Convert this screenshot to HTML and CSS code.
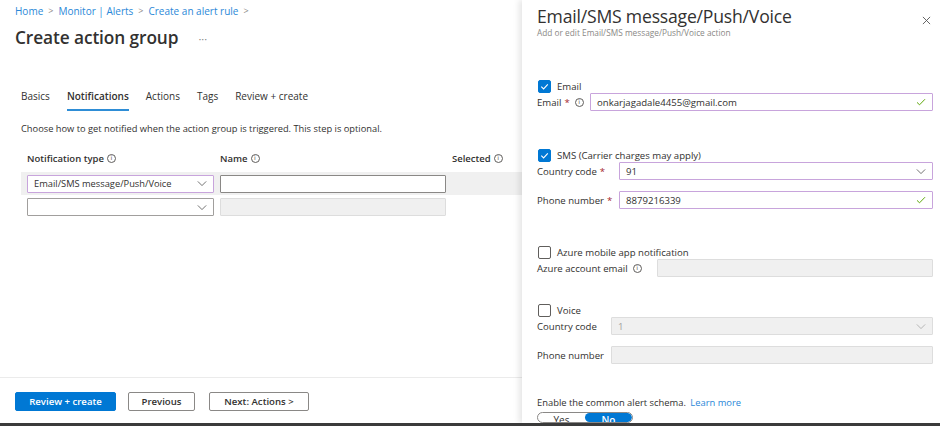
FILE: index.html
```html
<!DOCTYPE html>
<html>
<head>
<meta charset="utf-8">
<link rel="stylesheet" href="styles.css">
</head>
<body>
<div class="screen">
  <div class="main">
    <div class="breadcrumb">
      <span class="crumb">Home</span><span class="sep">&gt;</span>
      <span class="crumb">Monitor | Alerts</span><span class="sep">&gt;</span>
      <span class="crumb">Create an alert rule</span><span class="sep">&gt;</span>
    </div>
    <div class="title-row">
      <h1 class="title">Create action group</h1>
      <span class="more">···</span>
    </div>
    <div class="tabs">
      <span class="tab">Basics</span>
      <span class="tab active">Notifications</span>
      <span class="tab">Actions</span>
      <span class="tab">Tags</span>
      <span class="tab">Review + create</span>
    </div>
    <p class="desc">Choose how to get notified when the action group is triggered. This step is optional.</p>
    <div class="table">
      <div class="thead">
        <div class="c1">Notification type <span class="info">i</span></div>
        <div class="c2">Name <span class="info">i</span></div>
        <div class="c3">Selected <span class="info">i</span></div>
      </div>
      <div class="trow hl">
        <div class="c1"><div class="select focus"><span>Email/SMS message/Push/Voice</span><svg class="chev" viewBox="0 0 12 8"><path d="M1 1.5 L6 6.5 L11 1.5" fill="none" stroke="#555" stroke-width="1"/></svg></div></div>
        <div class="c2"><div class="input"></div></div>
        <div class="c3"></div>
      </div>
      <div class="trow">
        <div class="c1"><div class="select"><span></span><svg class="chev" viewBox="0 0 12 8"><path d="M1 1.5 L6 6.5 L11 1.5" fill="none" stroke="#555" stroke-width="1"/></svg></div></div>
        <div class="c2"><div class="input disabled"></div></div>
        <div class="c3"></div>
      </div>
    </div>
    <div class="spacer"></div>
    <div class="footer">
      <button class="btn primary">Review + create</button>
      <button class="btn prev">Previous</button>
      <button class="btn next">Next: Actions &gt;</button>
    </div>
  </div>
  <div class="panel">
    <div class="panel-head">
      <div>
        <h2 class="ptitle">Email/SMS message/Push/Voice</h2>
        <div class="psub">Add or edit Email/SMS message/Push/Voice action</div>
      </div>
      <svg class="close" viewBox="0 0 10 10"><path d="M1 1 L9 9 M9 1 L1 9" stroke="#555" stroke-width="1" fill="none"/></svg>
    </div>

    <div class="section s-email">
      <div class="check-row"><span class="cb on"><svg viewBox="0 0 12 12"><path d="M2.5 6.2 L5 8.6 L9.6 3.6" fill="none" stroke="#fff" stroke-width="1.2"/></svg></span><span>Email</span></div>
      <div class="field">
        <label class="lbl w-email">Email <span class="req">*</span> <span class="info">i</span></label>
        <div class="input focus grow"><span>onkarjagadale4455@gmail.com</span><svg class="ok" viewBox="0 0 12 10"><path d="M1 5.5 L4.2 8.5 L11 1.5" fill="none" stroke="#57a300" stroke-width="1.2"/></svg></div>
      </div>
    </div>

    <div class="section s-sms">
      <div class="check-row"><span class="cb on"><svg viewBox="0 0 12 12"><path d="M2.5 6.2 L5 8.6 L9.6 3.6" fill="none" stroke="#fff" stroke-width="1.2"/></svg></span><span>SMS (Carrier charges may apply)</span></div>
      <div class="field">
        <label class="lbl w-sms">Country code <span class="req">*</span></label>
        <div class="select focus grow"><span>91</span><svg class="chev" viewBox="0 0 12 8"><path d="M1 1.5 L6 6.5 L11 1.5" fill="none" stroke="#555" stroke-width="1"/></svg></div>
      </div>
      <div class="field f2">
        <label class="lbl w-sms">Phone number <span class="req">*</span></label>
        <div class="input focus grow"><span>8879216339</span><svg class="ok" viewBox="0 0 12 10"><path d="M1 5.5 L4.2 8.5 L11 1.5" fill="none" stroke="#57a300" stroke-width="1.2"/></svg></div>
      </div>
    </div>

    <div class="section s-azure">
      <div class="check-row"><span class="cb"></span><span>Azure mobile app notification</span></div>
      <div class="field">
        <label class="lbl w-azure">Azure account email <span class="info">i</span></label>
        <div class="input disabled grow"></div>
      </div>
    </div>

    <div class="section s-voice">
      <div class="check-row"><span class="cb"></span><span>Voice</span></div>
      <div class="field">
        <label class="lbl w-voice">Country code</label>
        <div class="select disabled grow"><span class="dim">1</span><svg class="chev" viewBox="0 0 12 8"><path d="M1 1.5 L6 6.5 L11 1.5" fill="none" stroke="#aaa" stroke-width="1"/></svg></div>
      </div>
      <div class="field f2">
        <label class="lbl w-voice">Phone number</label>
        <div class="input disabled grow"></div>
      </div>
    </div>

    <div class="schema">Enable the common alert schema. <span class="link">Learn more</span></div>
    <div class="toggle"><span class="opt">Yes</span><span class="opt sel">No</span></div>
  </div>
</div>
<div class="taskbar"></div>
</body>
</html>
```

FILE: styles.css
```css
* { box-sizing: border-box; }
html, body { margin: 0; padding: 0; }
body {
  width: 940px;
  height: 426px;
  overflow: hidden;
  font-family: "Open Sans", "Noto Sans", sans-serif;
  color: #323130;
  background: #fff;
}
.screen {
  display: flex;
  height: 423px;
  overflow: hidden;
}
.taskbar {
  height: 3px;
  background: #3b3b3b;
}
.main {
  width: 522px;
  flex: none;
  display: flex;
  flex-direction: column;
}
.breadcrumb {
  padding: 4px 0 0 15px;
  font-size: 10px;
  line-height: 14px;
  color: #2b88d8;
  display: flex;
  gap: 5px;
}
.sep { color: #8a8886; font-size: 9px; }
.title-row {
  display: flex;
  align-items: center;
  padding: 7px 0 0 15px;
  gap: 20px;
}
.title {
  margin: 0;
  font-size: 17.3px;
  font-weight: 600;
  line-height: 26px;
  color: #323130;
  letter-spacing: -0.1px;
}
.more { color: #8a8886; font-size: 11px; }
.tabs {
  display: flex;
  padding: 38px 0 0 21px;
  gap: 17px;
  font-size: 10px;
}
.tab {
  line-height: 14px;
  padding-bottom: 6px;
  border-bottom: 2px solid transparent;
  color: #323130;
}
.tab.active {
  font-weight: 600;
  border-bottom-color: #2e8dd6;
}
.desc {
  margin: 11px 0 0 21px;
  font-size: 9.3px;
  line-height: 14px;
  color: #323130;
}
.table { margin-top: 10px; padding-left: 21px; }
.thead, .trow { display: flex; }
.thead {
  font-size: 9.5px;
  font-weight: 600;
  height: 24px;
  align-items: center;
}
.c1 { width: 199px; padding-left: 6px; flex: none; }
.c2 { width: 232px; flex: none; }
.c3 { flex: 1; }
.thead .c1, .thead .c2, .thead .c3 { display: flex; align-items: center; gap: 3px; }
.info {
  display: inline-flex;
  align-items: center;
  justify-content: center;
  width: 9px;
  height: 9px;
  border: 1px solid #605e5c;
  border-radius: 50%;
  font-size: 6.5px;
  font-weight: 400;
  line-height: 1;
  color: #605e5c;
  font-family: "DejaVu Sans", sans-serif;
}
.trow {
  height: 23px;
  align-items: center;
  margin-top: 2px;
}
.trow.hl { background: #f0f0f0; }
.trow + .trow { margin-top: 3px; height: 18px; }
.trow .c1 { padding-right: 6px; }
.trow .c2 { padding-right: 6px; }
.select, .input {
  height: 18px;
  border: 1px solid #8a8886;
  background: #fff;
  display: flex;
  align-items: center;
  padding: 0 6px;
  font-size: 9.6px;
  color: #323130;
  border-radius: 1px;
}
.trow .select { font-size: 9.3px; }
.select span, .input span { flex: 1; white-space: nowrap; }
.select.focus, .input.focus { border-color: #c8a4dc; }
.trow .select { border-color: #a19f9d; }
.trow .select.focus { border-color: #c8a4dc; }
.input.disabled, .select.disabled {
  background: #f0f0f0;
  border-color: #dddddd;
}
.dim { color: #a19f9d; }
.chev { width: 10px; height: 7px; flex: none; }
.ok { width: 10px; height: 8px; flex: none; }
.spacer { flex: 1; }
.footer {
  border-top: 1px solid #ebebeb;
  height: 46px;
  display: flex;
  align-items: flex-start;
  padding: 14px 0 0 15px;
  gap: 12px;
}
.btn {
  height: 19px;
  font-family: inherit;
  font-size: 9.6px;
  font-weight: 600;
  border: 1px solid #8a8886;
  background: #fff;
  color: #323130;
  border-radius: 2px;
  padding: 0;
  cursor: pointer;
}
.btn.primary {
  width: 101px;
  background: #0078d4;
  border-color: #0078d4;
  color: #fff;
}
.btn.prev { width: 67px; }
.btn.next { width: 100px; margin-left: 2px; }

.panel {
  flex: 1;
  position: relative;
  box-shadow: -3px 0 6px rgba(0,0,0,0.10);
  padding: 0 7px 0 15px;
  overflow: hidden;
  display: flex;
  flex-direction: column;
}
.panel-head {
  display: flex;
  justify-content: space-between;
  align-items: flex-start;
  padding-top: 5px;
}
.ptitle {
  margin: 0;
  font-size: 17.6px;
  font-weight: 400;
  line-height: 22px;
  color: #323130;
  letter-spacing: -0.2px;
}
.psub {
  font-size: 8.3px;
  color: #8a8886;
  line-height: 10px;
  margin-top: 1px;
}
.close { width: 9px; height: 9px; margin-top: 11px; margin-right: 2px; }
.section { display: flex; flex-direction: column; }
.s-email { margin-top: 41px; }
.s-sms { margin-top: 37px; }
.s-azure { margin-top: 36px; }
.s-voice { margin-top: 26px; }
.check-row {
  display: flex;
  align-items: center;
  gap: 6px;
  font-size: 9.6px;
  height: 14px;
  margin-left: 1px;
}
.cb {
  width: 13px;
  height: 13px;
  border: 1px solid #605e5c;
  border-radius: 2px;
  display: flex;
  align-items: center;
  justify-content: center;
  flex: none;
}
.cb.on { background: #0078d4; border-color: #0078d4; }
.cb svg { width: 11px; height: 11px; }
.field {
  display: flex;
  align-items: center;
  font-size: 9.6px;
  margin-top: 0;
}
.field.f2 { margin-top: 11px; }
.lbl { flex: none; display: flex; align-items: center; gap: 3px; color: #323130; }
.req { color: #a4262c; }
.w-email { width: 53px; }
.w-sms { width: 82px; }
.w-azure { width: 120px; }
.w-voice { width: 74px; }
.lbl .info { margin-left: 2px; }
.grow { flex: 1; }
.schema {
  margin-top: 32px;
  font-size: 9.4px;
  color: #323130;
}
.link { color: #2b88d8; margin-left: 2px; }
.toggle {
  margin-top: 3px;
  display: flex;
  width: 96px;
  height: 18px;
  border: 1px solid #8a8886;
  border-radius: 9px;
  overflow: hidden;
  font-size: 10px;
}
.opt { flex: 1; text-align: center; line-height: 14px; color: #323130; }
.opt.sel { background: #0078d4; color: #fff; border-radius: 9px; font-weight: 600; }
```
